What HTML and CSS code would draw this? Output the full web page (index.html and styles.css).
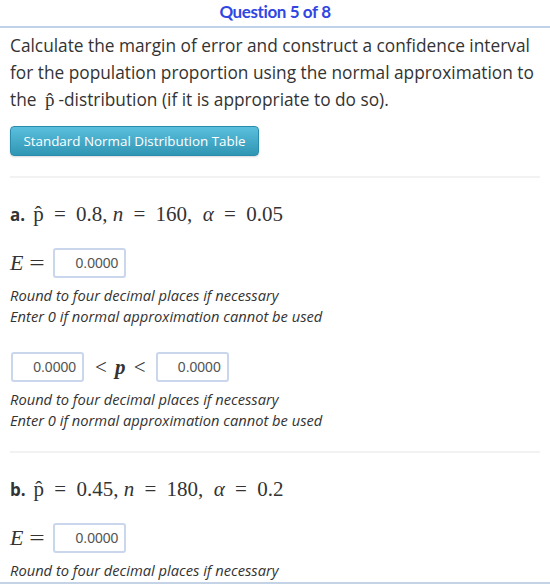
FILE: index.html
```html
<!DOCTYPE html>
<html>
<head>
<meta charset="utf-8">
<link rel="stylesheet" href="styles.css">
</head>
<body>
<div class="page">
  <div class="header">Question 5 of 8</div>
  <div class="content">
    <p class="prompt">Calculate the margin of error and construct a confidence interval for the population proportion using the normal approximation to the <span class="m phat">p̂</span>-distribution (if it is appropriate to do so).</p>
    <button class="btn">Standard Normal Distribution Table</button>
    <hr class="sep">
    <div class="part">
      <div class="given"><b class="lbl">a.</b> <span class="m"><span class="phat">p̂</span> <span class="rel">=</span> 0.8, <i>n</i> <span class="rel">=</span> 160, &nbsp;<i>α</i> <span class="rel">=</span> 0.05</span></div>
      <div class="row"><span class="m"><i class="ev">E</i><span class="rel">=</span></span><span class="inp">0.0000</span></div>
      <div class="hint">Round to four decimal places if necessary<br>Enter 0 if normal approximation cannot be used</div>
      <div class="row interval"><span class="inp">0.0000</span><span class="m">&lt; <i class="pv">p</i> &lt;</span><span class="inp">0.0000</span></div>
      <div class="hint">Round to four decimal places if necessary<br>Enter 0 if normal approximation cannot be used</div>
    </div>
    <hr class="sep">
    <div class="part">
      <div class="given"><b class="lbl">b.</b> <span class="m"><span class="phat">p̂</span> <span class="rel">=</span> 0.45, <i>n</i> <span class="rel">=</span> 180, &nbsp;<i>α</i> <span class="rel">=</span> 0.2</span></div>
      <div class="row"><span class="m"><i class="ev">E</i><span class="rel">=</span></span><span class="inp">0.0000</span></div>
      <div class="hint">Round to four decimal places if necessary</div>
    </div>
  </div>
</div>
</body>
</html>
```
FILE: styles.css
```css
html, body { margin: 0; padding: 0; background: #fff; }
body { font-family: "Open Sans", sans-serif; color: #333; }
.page { width: 550px; height: 584px; overflow: hidden; box-sizing: border-box; border-bottom: 2px solid #c5d3e6; }
.header { height: 26px; border-bottom: 2px solid #c0d1ea; text-align: center; font-family: Lato, sans-serif; font-weight: 700; font-size: 17px; color: #3046e2; line-height: 24px; letter-spacing: -0.4px; }
.content { padding: 0 10px; }
.prompt { margin: 4px 0 0; font-size: 17.3px; line-height: 27px; }
.m { font-family: "Liberation Serif", "DejaVu Serif", serif; font-size: 21px; }
.prompt .phat { margin: 0 4px 0 4px; font-size: 19px; }
.btn { margin-top: 13px; height: 30px; width: 249px; padding: 0; border: 1px solid #2b8bae; border-radius: 4px; background: linear-gradient(#5bc0de, #2f96b4); color: #fff; font-family: "Open Sans", sans-serif; font-size: 13.4px; box-shadow: 0 1px 2px rgba(0,0,0,0.15); }
.sep { margin: 20px 0 0; border: 0; border-top: 2px solid #f2f2f2; }
.part { padding-top: 21px; }
.given { height: 30px; display: flex; align-items: center; gap: 8px; }
.lbl { font-size: 17px; font-weight: 700; }
.rel { margin: 0 5px; }
.row { display: flex; align-items: center; gap: 10px; margin-top: 19px; }
.ev { font-size: 22px; }
.row .rel { margin: 0 0 0 8px; display: inline-block; transform: scaleX(1.3); }
.inp { box-sizing: border-box; width: 73px; height: 30px; border: 2px solid #c9d6ec; border-radius: 3px; font-family: "Liberation Sans", Arial, sans-serif; font-size: 14px; color: #555; text-align: right; padding: 0 6px; line-height: 26px; }
.hint { font-style: italic; font-size: 14.7px; line-height: 21px; margin-top: 7px; }
.interval { margin-top: 25px; gap: 8px; margin-left: 1px; }
.interval .m { margin: 0 2px 0 3px; word-spacing: 3px; }
.pv { font-weight: 700; }
```
